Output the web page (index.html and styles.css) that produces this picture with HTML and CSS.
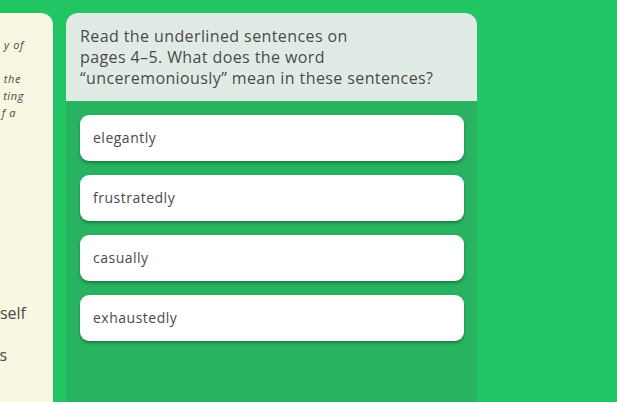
FILE: index.html
```html
<html>
<head>
    <meta charset="utf-8">
    <title>Question</title>
    <link rel="stylesheet" href="styles.css">
</head>
<body>
    <div class="page">
        <div class="passage">
            <div class="line it l1">y of</div>
            <div class="line it l2">&nbsp;</div>
            <div class="line it l3">the</div>
            <div class="line it l4">ting</div>
            <div class="line it l5">f a</div>
            <div class="line big l6">self</div>
            <div class="line big l7">s</div>
        </div>
        <div class="quiz">
            <div class="question">
                Read the underlined sentences on<br>
                pages 4&ndash;5. What does the word<br>
                &ldquo;unceremoniously&rdquo; mean in these sentences?
            </div>
            <div class="answers">
                <div class="option">elegantly</div>
                <div class="option">frustratedly</div>
                <div class="option">casually</div>
                <div class="option">exhaustedly</div>
            </div>
        </div>
    </div>
</body>
</html>
```

FILE: styles.css
```css
* {box-sizing:border-box;}
body {margin:0;background:#22c564;font-family:"Open Sans", sans-serif;color:#4a4a4a;height:402px;overflow:hidden;}
.page {display:flex;gap:13px;padding-top:13px;height:100%;}

.passage {width:53px;flex:none;background:#f9f7e2;border-radius:0 12px 0 0;overflow:hidden;padding-top:23px;}
.line {display:flex;justify-content:flex-end;white-space:nowrap;}
.it {font-style:italic;font-size:11px;line-height:17px;letter-spacing:0.6px;}
.big {font-size:16px;line-height:42px;}
.l1 {padding-right:29px;}
.l3 {padding-right:32px;}
.l4 {padding-right:29px;}
.l5 {padding-right:37px;}
.l6 {margin-top:171px;padding-right:27px;}
.l7 {padding-right:46px;}

.quiz {width:411px;flex:none;background:#27b35f;border-radius:12px 12px 0 0;overflow:hidden;}
.question {background:#e1ebe6;padding:13px 14px;font-size:16px;line-height:20.8px;height:88px;letter-spacing:0.4px;}
.answers {display:flex;flex-direction:column;gap:14px;padding:14px 13px 0 14px;}
.option {background:#fff;height:46px;border-radius:9px;padding:0 13px 2px;display:flex;align-items:center;font-size:14px;letter-spacing:0.5px;box-shadow:0 2px 3px rgba(0,0,0,0.3);}
```
